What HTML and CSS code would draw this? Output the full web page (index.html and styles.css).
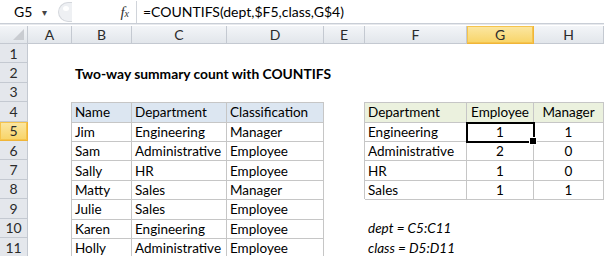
FILE: index.html
```html
<!DOCTYPE html>
<html lang="en">
<head>
    <meta charset="UTF-8">
    <title>COUNTIFS two-way summary</title>
    <link rel="stylesheet" href="styles.css">
</head>
<body>
    <div class="formula-bar">
        <div class="name-box">G5</div>
        <div class="name-arrow">&#9662;</div>
        <div class="grip"><span></span></div>
        <div class="fx"><i>f</i><small>x</small></div>
        <div class="formula">=COUNTIFS(dept,$F5,class,G$4)</div>
    </div>

    <div class="sheet">
        <!-- column headers -->
        <div class="corner"><span></span></div>
        <div class="col-head">A</div>
        <div class="col-head">B</div>
        <div class="col-head">C</div>
        <div class="col-head">D</div>
        <div class="col-head">E</div>
        <div class="col-head">F</div>
        <div class="col-head active">G</div>
        <div class="col-head">H</div>

        <!-- row headers -->
        <div class="row-head r1">1</div>
        <div class="row-head r2">2</div>
        <div class="row-head r3">3</div>
        <div class="row-head r4">4</div>
        <div class="row-head r5 active">5</div>
        <div class="row-head r6">6</div>
        <div class="row-head r7">7</div>
        <div class="row-head r8">8</div>
        <div class="row-head r9">9</div>
        <div class="row-head r10">10</div>
        <div class="row-head r11">11</div>

        <div class="title">Two-way summary count with COUNTIFS</div>

        <div class="data-table">
            <div class="cell th">Name</div><div class="cell th">Department</div><div class="cell th">Classification</div>
            <div class="cell">Jim</div><div class="cell">Engineering</div><div class="cell">Manager</div>
            <div class="cell">Sam</div><div class="cell">Administrative</div><div class="cell">Employee</div>
            <div class="cell">Sally</div><div class="cell">HR</div><div class="cell">Employee</div>
            <div class="cell">Matty</div><div class="cell">Sales</div><div class="cell">Manager</div>
            <div class="cell">Julie</div><div class="cell">Sales</div><div class="cell">Employee</div>
            <div class="cell">Karen</div><div class="cell">Engineering</div><div class="cell">Employee</div>
            <div class="cell">Holly</div><div class="cell">Administrative</div><div class="cell">Employee</div>
        </div>

        <div class="summary-table">
            <div class="cell th">Department</div><div class="cell th num">Employee</div><div class="cell th num">Manager</div>
            <div class="cell">Engineering</div><div class="cell num selected">1</div><div class="cell num">1</div>
            <div class="cell">Administrative</div><div class="cell num">2</div><div class="cell num">0</div>
            <div class="cell">HR</div><div class="cell num">1</div><div class="cell num">0</div>
            <div class="cell">Sales</div><div class="cell num">1</div><div class="cell num">1</div>
        </div>

        <div class="note n1">dept = C5:C11</div>
        <div class="note n2">class = D5:D11</div>
    </div>
</body>
</html>
```

FILE: styles.css
```css
* {
    margin: 0;
    padding: 0;
    box-sizing: border-box;
}

body {
    font-family: Lato, 'Open Sans', sans-serif;
    font-size: 13.5px;
    color: #000;
    background: #fff;
    width: 604px;
    height: 256px;
    overflow: hidden;
}

/* formula bar */
.formula-bar {
    height: 24px;
    display: flex;
    align-items: center;
    background: #fff;
    border-bottom: 1px solid #c9ced6;
    box-shadow: 0 1px 0 #e8eaee;
    margin-bottom: 2px;
}

.name-box {
    width: 42px;
    padding-left: 14px;
    font-size: 14px;
}

.name-arrow {
    width: 16px;
    font-size: 10px;
    color: #444;
}

.grip {
    width: 14px;
    height: 20px;
    border: 1px solid #d4d7dc;
    border-right: none;
    border-radius: 10px 0 0 10px;
    background: #eef0f3;
    position: relative;
}

.grip span {
    position: absolute;
    left: 4px;
    top: 3px;
    width: 6px;
    height: 5px;
    border-radius: 50%;
    background: #fff;
}

.fx {
    width: 65px;
    height: 22px;
    text-align: right;
    padding-right: 7px;
    border-right: 1px solid #d0d4da;
    font-family: 'Liberation Serif', serif;
    font-size: 15px;
    line-height: 22px;
    color: #333;
}

.fx small {
    font-size: 10px;
    font-style: italic;
}

.formula {
    padding-left: 6px;
    font-size: 14px;
}

/* grid */
.sheet {
    display: grid;
    grid-template-columns: 28px 44px 60px 95px 97px 41px 102px 67px 70px;
    grid-template-rows: 18px repeat(11, 19.4px);
    position: relative;
}

.corner,
.col-head,
.row-head {
    background: linear-gradient(#f3f5f8, #e2e6eb);
    border-right: 1px solid #c4c9d1;
    border-bottom: 1px solid #c4c9d1;
    color: #2b2b2b;
    display: flex;
    align-items: center;
    justify-content: center;
    font-size: 14px;
}

.corner {
    position: relative;
}

.corner span {
    position: absolute;
    right: 3px;
    bottom: 3px;
    width: 0;
    height: 0;
    border-left: 11px solid transparent;
    border-bottom: 11px solid #c9ccd1;
}

.row-head {
    grid-column: 1;
    background: #e4e7ec;
}

.col-head.active,
.row-head.active {
    background: linear-gradient(#fbe7a4, #f8d467);
    border-color: #f0b538;
    box-shadow: inset 0 0 0 1px #f5c44d;
}

.r1 { grid-row: 2; }
.r2 { grid-row: 3; }
.r3 { grid-row: 4; }
.r4 { grid-row: 5; }
.r5 { grid-row: 6; }
.r6 { grid-row: 7; }
.r7 { grid-row: 8; }
.r8 { grid-row: 9; }
.r9 { grid-row: 10; }
.r10 { grid-row: 11; }
.r11 { grid-row: 12; }

.title {
    grid-column: 3 / 8;
    grid-row: 3;
    font-weight: bold;
    font-size: 13.8px;
    padding-left: 3px;
    display: flex;
    align-items: center;
}

.data-table,
.summary-table {
    display: grid;
    grid-auto-rows: 19.4px;
    border-top: 1px solid #c6c6c6;
    border-left: 1px solid #c6c6c6;
}

.data-table {
    grid-column: 3 / 6;
    grid-row: 5 / 13;
    grid-template-columns: 60px 95px 97px;
    margin-left: -1px;
}

.summary-table {
    grid-column: 7 / 10;
    grid-row: 5 / 10;
    grid-template-columns: 102px 67px 70px;
    margin-left: -1px;
}

.cell {
    border-right: 1px solid #c6c6c6;
    border-bottom: 1px solid #c6c6c6;
    padding-left: 3px;
    display: flex;
    align-items: center;
    white-space: nowrap;
    position: relative;
}

.data-table .th {
    background: #dce6f1;
}

.summary-table .th {
    background: #ebf1de;
}

.num {
    justify-content: center;
    padding-left: 0;
}

.selected {
    outline: 2px solid #000;
    outline-offset: -1px;
    z-index: 1;
}

.selected::after {
    content: '';
    position: absolute;
    right: -4px;
    bottom: -4px;
    width: 6px;
    height: 6px;
    background: #000;
    border: 1px solid #fff;
}

.note {
    grid-column: 7 / 10;
    font-style: italic;
    padding-left: 3px;
    display: flex;
    align-items: center;
}

.n1 { grid-row: 11; }
.n2 { grid-row: 12; }
```
